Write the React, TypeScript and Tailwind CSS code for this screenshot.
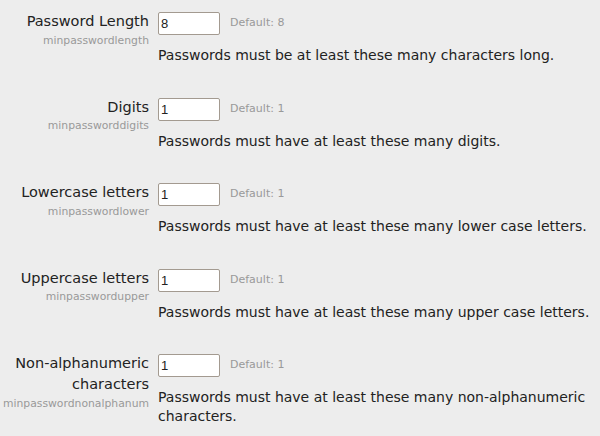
import React from "react";

const rows = [
  { label: "Password Length", name: "minpasswordlength", value: "8", def: "8", desc: "Passwords must be at least these many characters long." },
  { label: "Digits", name: "minpassworddigits", value: "1", def: "1", desc: "Passwords must have at least these many digits." },
  { label: "Lowercase letters", name: "minpasswordlower", value: "1", def: "1", desc: "Passwords must have at least these many lower case letters." },
  { label: "Uppercase letters", name: "minpasswordupper", value: "1", def: "1", desc: "Passwords must have at least these many upper case letters." },
  { label: "Non-alphanumeric characters", name: "minpasswordnonalphanum", value: "1", def: "1", desc: "Passwords must have at least these many non-alphanumeric characters." },
];

export default function App() {
  return (
    <div className="w-[600px] h-[436px] overflow-hidden bg-[#ededed] text-[#222] pt-[12px]" style={{ fontFamily: '"DejaVu Sans", sans-serif' }}>
      {rows.map((r) => (
        <div key={r.name} className="flex mb-[32.5px]">
          <div className="w-[150px] shrink-0 text-right pr-[1px]">
            <div className="text-[14.5px] leading-[21px] -mt-[1px]">{r.label}</div>
            <div className="text-[10.8px] leading-[14px] mt-[1.5px] text-[#999]">{r.name}</div>
          </div>
          <div className="pl-[8px] flex-1">
            <div className="flex items-center">
              <input
                readOnly
                value={r.value}
                className="w-[62px] h-[23px] bg-white border border-[#a39a90] rounded-[2px] px-[2px] text-[13px] outline-none"
                style={{ fontFamily: '"Liberation Sans", sans-serif' }}
              />
              <span className="ml-[10px] text-[11px] text-[#999]">Default: {r.def}</span>
            </div>
            <div className="text-[14px] leading-[19px] mt-[11px] pr-[8px]">{r.desc}</div>
          </div>
        </div>
      ))}
    </div>
  );
}
